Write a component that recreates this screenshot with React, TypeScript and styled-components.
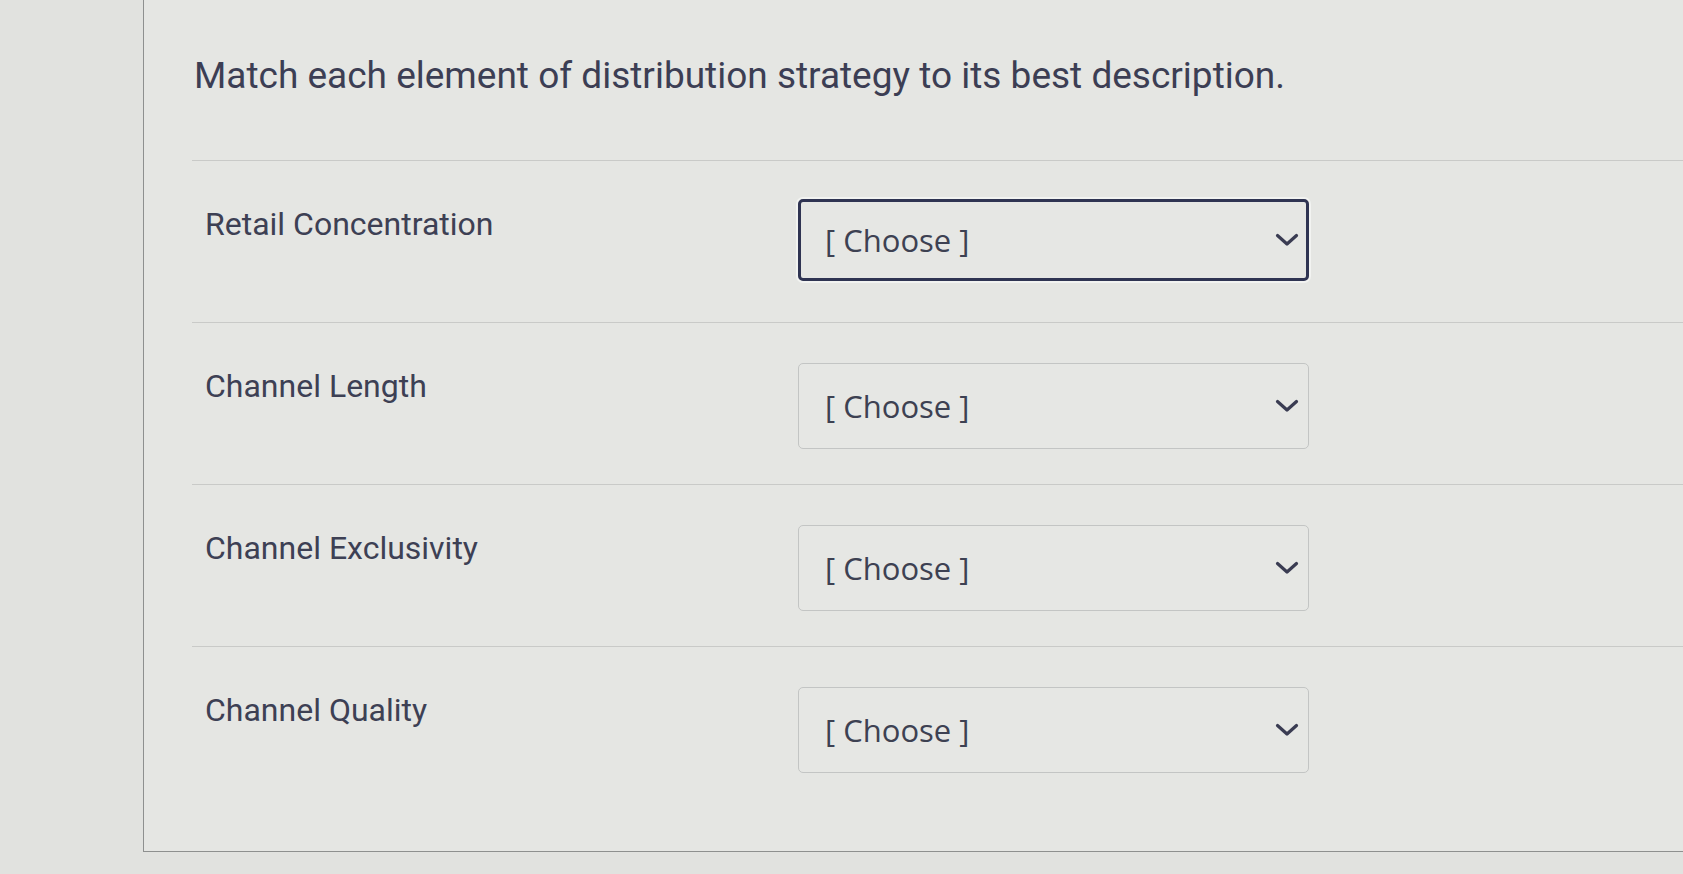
import React from "react";
import styled, { createGlobalStyle } from "styled-components";

const Global = createGlobalStyle`
  html, body { margin: 0; padding: 0; }
  body {
    background: #e1e2df;
    font-family: Roboto, "Noto Sans", "Liberation Sans", sans-serif;
    color: #3b3f52;
    overflow: hidden;
  }
`;

const Page = styled.div`
  display: flex;
  height: 874px;
  padding-left: 143px;
  box-sizing: border-box;
`;

const Panel = styled.section`
  flex: 1;
  height: 852px;
  box-sizing: border-box;
  border-left: 1.5px solid #8e908f;
  border-bottom: 1.5px solid #8e908f;
  background: #e5e6e3;
  padding: 54px 0 0 48px;
  display: flex;
  flex-direction: column;
`;

const Title = styled.h1`
  margin: 0 0 0 2px;
  font-family: Roboto, "Noto Sans", sans-serif;
  font-size: 37px;
  font-weight: 400;
  line-height: 44px;
  color: #3c3e54;
`;

const List = styled.div`
  margin-top: 62px;
  display: flex;
  flex-direction: column;
`;

const Row = styled.div`
  height: 162px;
  box-sizing: border-box;
  border-top: 1.5px solid #c9cac8;
  display: grid;
  grid-template-columns: 606px 511px;
  align-items: start;
`;

const Label = styled.div`
  padding: 45px 0 0 13px;
  font-family: Roboto, "Noto Sans", sans-serif;
  font-size: 32px;
  line-height: 36px;
  color: #3d4054;
`;

const Select = styled.button<{ $focused?: boolean }>`
  margin-top: ${(p) => (p.$focused ? "38px" : "40px")};
  height: ${(p) => (p.$focused ? "82px" : "86px")};
  width: 511px;
  box-sizing: border-box;
  display: flex;
  align-items: center;
  justify-content: space-between;
  padding: 0 ${(p) => (p.$focused ? "7px" : "9px")} 0 ${(p) => (p.$focused ? "24px" : "26px")};
  background: #e6e7e4;
  border: ${(p) => (p.$focused ? "3.5px solid #2f3452" : "1.5px solid #c3c5c4")};
  box-shadow: ${(p) => (p.$focused ? "0 0 0 2px #f2f3f1" : "none")};
  border-radius: 5px;
  font-family: "Open Sans", Lato, "Liberation Sans", sans-serif;
  font-size: 31px;
  color: #3d4152;
  cursor: pointer;
`;

const Chevron = () => (
  <svg width="24" height="14" viewBox="0 0 24 14" fill="none">
    <path d="M2.5 2.5 L12 11 L21.5 2.5" stroke="#3a3c52" strokeWidth="3.2" strokeLinecap="round" strokeLinejoin="round" />
  </svg>
);

const items = ["Retail Concentration", "Channel Length", "Channel Exclusivity", "Channel Quality"];

export default function App() {
  return (
    <>
      <Global />
      <Page>
        <Panel>
          <Title>Match each element of distribution strategy to its best description.</Title>
          <List>
            {items.map((label, i) => (
              <Row key={label}>
                <Label>{label}</Label>
                <Select $focused={i === 0}>
                  <span>[ Choose ]</span>
                  <Chevron />
                </Select>
              </Row>
            ))}
          </List>
        </Panel>
      </Page>
    </>
  );
}
